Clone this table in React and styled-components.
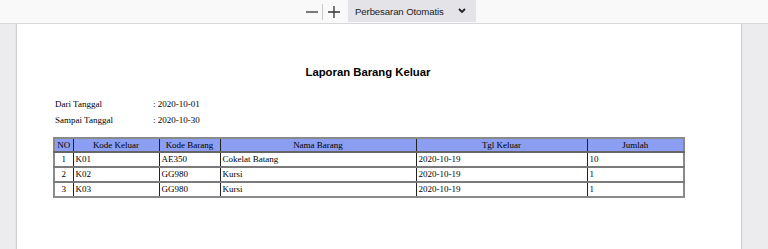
import React from "react";
import styled, { createGlobalStyle } from "styled-components";

const GlobalStyle = createGlobalStyle`
  html, body {
    margin: 0;
    padding: 0;
    height: 100%;
    overflow: hidden;
  }
  body {
    background: #ececee;
  }
`;

const rows = [
  { no: 1, kodeKeluar: "K01", kodeBarang: "AE350", nama: "Cokelat Batang", tgl: "2020-10-19", jumlah: 10 },
  { no: 2, kodeKeluar: "K02", kodeBarang: "GG980", nama: "Kursi", tgl: "2020-10-19", jumlah: 1 },
  { no: 3, kodeKeluar: "K03", kodeBarang: "GG980", nama: "Kursi", tgl: "2020-10-19", jumlah: 1 },
];

const App = () => {
  return (
    <Viewer>
      <GlobalStyle />
      <Toolbar>
        <ZoomButton aria-label="zoom out">
          <svg width="14" height="14" viewBox="0 0 14 14">
            <path d="M1 7h12" stroke="#333" strokeWidth="1.3" />
          </svg>
        </ZoomButton>
        <Separator />
        <ZoomButton aria-label="zoom in">
          <svg width="14" height="14" viewBox="0 0 14 14">
            <path d="M1 7h12M7 1v12" stroke="#333" strokeWidth="1.3" />
          </svg>
        </ZoomButton>
        <ScaleSelect>
          <span>Perbesaran Otomatis</span>
          <svg width="8" height="6" viewBox="0 0 8 6">
            <path d="M1 1l3 3 3-3" stroke="#222" strokeWidth="1.8" fill="none" />
          </svg>
        </ScaleSelect>
      </Toolbar>
      <Canvas>
        <Page>
          <Title>Laporan Barang Keluar</Title>
          <InfoList>
            <InfoRow>
              <InfoLabel>Dari Tanggal</InfoLabel>
              <span>: 2020-10-01</span>
            </InfoRow>
            <InfoRow>
              <InfoLabel>Sampai Tanggal</InfoLabel>
              <span>: 2020-10-30</span>
            </InfoRow>
          </InfoList>
          <Table>
            <colgroup>
              <col style={{ width: 19 }} />
              <col style={{ width: 86 }} />
              <col style={{ width: 61 }} />
              <col style={{ width: 196 }} />
              <col style={{ width: 171 }} />
              <col style={{ width: 97 }} />
            </colgroup>
            <thead>
              <tr>
                <Th>NO</Th>
                <Th>Kode Keluar</Th>
                <Th>Kode Barang</Th>
                <Th>Nama Barang</Th>
                <Th>Tgl Keluar</Th>
                <Th>Jumlah</Th>
              </tr>
            </thead>
            <tbody>
              {rows.map((r) => (
                <tr key={r.no}>
                  <Td center>{r.no}</Td>
                  <Td>{r.kodeKeluar}</Td>
                  <Td>{r.kodeBarang}</Td>
                  <Td>{r.nama}</Td>
                  <Td>{r.tgl}</Td>
                  <Td>{r.jumlah}</Td>
                </tr>
              ))}
            </tbody>
          </Table>
        </Page>
      </Canvas>
    </Viewer>
  );
};

const Viewer = styled.div`
  display: flex;
  flex-direction: column;
  height: 249px;
`;

const Toolbar = styled.div`
  display: flex;
  align-items: center;
  height: 24px;
  padding-left: 304px;
  background: #f9f9fa;
  border-bottom: 1px solid #d7d7db;
  box-sizing: border-box;
`;

const ZoomButton = styled.div`
  display: flex;
  align-items: center;
  justify-content: center;
  width: 15px;
  height: 22px;
`;

const Separator = styled.div`
  width: 1px;
  height: 16px;
  margin: 0 3px;
  background: #c8c8cc;
`;

const ScaleSelect = styled.div`
  display: flex;
  align-items: center;
  justify-content: space-between;
  width: 128px;
  height: 22px;
  margin: 0 0 1px 7px;
  padding: 0 10px 0 7px;
  box-sizing: border-box;
  background: #e3e3e8;
  font-family: "Liberation Sans", Arial, sans-serif;
  font-size: 9.6px;
  letter-spacing: -0.1px;
  white-space: nowrap;
  color: #222;
`;

const Canvas = styled.div`
  flex: 1;
  display: flex;
  padding-left: 17px;
  overflow: hidden;
`;

const Page = styled.div`
  width: 724px;
  background: #fff;
  box-shadow: -1px 0 1px #cfcfd3, 1px 0 1px #cfcfd3;
  padding: 41px 58px 0 36px;
  box-sizing: border-box;
`;

const Title = styled.h1`
  margin: 0 0 18px;
  text-align: center;
  font-family: "Liberation Sans", Arial, sans-serif;
  font-size: 11.3px;
  font-weight: bold;
  color: #000;
  line-height: 15px;
`;

const InfoList = styled.div`
  display: flex;
  flex-direction: column;
  gap: 4px;
  margin-bottom: 11px;
  padding-left: 2px;
  font-family: "Liberation Serif", "Times New Roman", serif;
  font-size: 9px;
  line-height: 12px;
  color: #000;
`;

const InfoRow = styled.div`
  display: flex;
`;

const InfoLabel = styled.span`
  width: 98px;
`;

const Table = styled.table`
  width: 630px;
  table-layout: fixed;
  border-collapse: collapse;
  border: 2px solid #8a8a8a;
  font-family: "Liberation Serif", "Times New Roman", serif;
  font-size: 9px;
  color: #000;
`;

const Th = styled.th`
  height: 12px;
  padding: 0 2px;
  background: #8c9ef2;
  font-weight: normal;
  text-align: center;
  border-left: 1px solid #222;
  border-bottom: 2px solid #666;
  line-height: 12px;
`;

const Td = styled.td`
  height: 13px;
  padding: 0 2px;
  text-align: ${(p) => (p.center ? "center" : "left")};
  border-left: 1px solid #222;
  border-top: 2px solid #7a7a7a;
  line-height: 13px;
`;

export default App;
